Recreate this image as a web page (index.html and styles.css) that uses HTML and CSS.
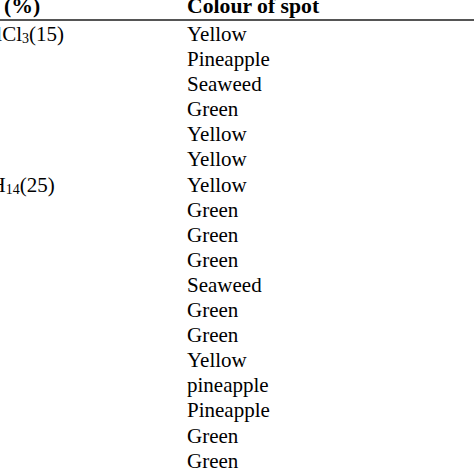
FILE: index.html
```html
<!DOCTYPE html>
<html>
<head>
<meta charset="utf-8">
<link rel="stylesheet" href="styles.css">
</head>
<body>
<div class="table">
  <div class="row head">
    <div class="c1">(%)</div>
    <div class="c2">Colour of spot</div>
  </div>
  <div class="body">
    <div class="row"><div class="c1 cut-a">AlCl<sub>3</sub>(15)</div><div class="c2">Yellow</div></div>
    <div class="row"><div class="c1"></div><div class="c2">Pineapple</div></div>
    <div class="row"><div class="c1"></div><div class="c2">Seaweed</div></div>
    <div class="row"><div class="c1"></div><div class="c2">Green</div></div>
    <div class="row"><div class="c1"></div><div class="c2">Yellow</div></div>
    <div class="row"><div class="c1"></div><div class="c2">Yellow</div></div>
    <div class="row"><div class="c1 cut-b">H<sub>14</sub>(25)</div><div class="c2">Yellow</div></div>
    <div class="row"><div class="c1"></div><div class="c2">Green</div></div>
    <div class="row"><div class="c1"></div><div class="c2">Green</div></div>
    <div class="row"><div class="c1"></div><div class="c2">Green</div></div>
    <div class="row"><div class="c1"></div><div class="c2">Seaweed</div></div>
    <div class="row"><div class="c1"></div><div class="c2">Green</div></div>
    <div class="row"><div class="c1"></div><div class="c2">Green</div></div>
    <div class="row"><div class="c1"></div><div class="c2">Yellow</div></div>
    <div class="row"><div class="c1"></div><div class="c2">pineapple</div></div>
    <div class="row"><div class="c1"></div><div class="c2">Pineapple</div></div>
    <div class="row"><div class="c1"></div><div class="c2">Green</div></div>
    <div class="row"><div class="c1"></div><div class="c2">Green</div></div>
  </div>
</div>
</body>
</html>
```

FILE: styles.css
```css
html, body {
  margin: 0;
  padding: 0;
  background: #fff;
  overflow: hidden;
}
body {
  font-family: "Liberation Serif", "Times New Roman", serif;
  font-size: 21px;
  color: #000;
}
.table {
  width: 474px;
}
.row {
  display: grid;
  grid-template-columns: 187px 1fr;
  line-height: 25.1px;
  height: 25.1px;
  white-space: nowrap;
}
.row.head {
  font-weight: bold;
  font-size: 21.7px;
  line-height: 19px;
  height: 19px;
  margin-top: -3px;
  padding-bottom: 3px;
  border-bottom: 2px solid #555;
}
.head .c1 {
  padding-left: 4px;
}
.body {
  padding-top: 1px;
}
.cut-a {
  text-indent: -18.8px;
}
.cut-b {
  text-indent: -9.4px;
}
sub {
  font-size: 14px;
  vertical-align: -2px;
  line-height: 0;
}
```
